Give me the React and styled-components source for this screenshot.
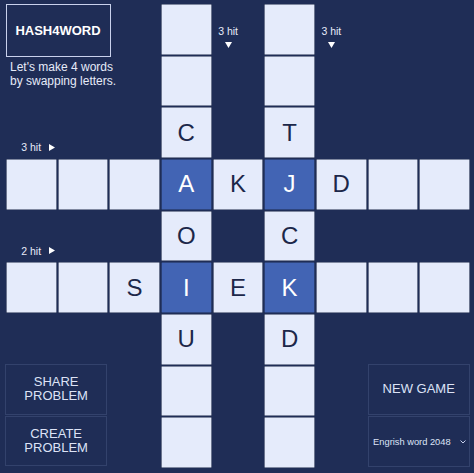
import React from "react";
import styled, { createGlobalStyle } from "styled-components";

const Global = createGlobalStyle`
  html, body { margin: 0; padding: 0; background: #1f2d56; }
  body { font-family: "Liberation Sans", Arial, sans-serif; }
`;

const Page = styled.div`
  width: 474px;
  height: 473px;
  background: #1f2d56;
  overflow: hidden;
  box-sizing: border-box;
  padding: 4px 0 0 6px;
`;

const Board = styled.div`
  display: grid;
  grid-template-columns: repeat(9, 50.6px);
  grid-template-rows: repeat(9, 50.6px);
  gap: 1.07px;
`;

const Cell = styled.div`
  grid-row: ${(p) => p.$r + 1};
  grid-column: ${(p) => p.$c + 1};
  background: ${(p) => (p.$hl ? "#4264b4" : "#e5ebfb")};
  color: ${(p) => (p.$hl ? "#ffffff" : "#1c2749")};
  box-shadow: inset 0 0 0 0.6px #1a2647;
  display: flex;
  align-items: center;
  justify-content: center;
  font-size: 24px;
  line-height: 1;
  user-select: none;
`;

const TitleBox = styled.div`
  grid-row: 1;
  grid-column: 1 / span 2;
  justify-self: start;
  align-self: start;
  width: 105px;
  height: 53px;
  margin-left: -0.5px;
  box-sizing: border-box;
  border: 1px solid #c9d1ec;
  display: flex;
  align-items: center;
  justify-content: center;
  color: #ffffff;
  font-weight: bold;
  font-size: 13px;
`;

const Desc = styled.div`
  grid-row: 2;
  grid-column: 1 / span 3;
  align-self: start;
  padding: 4.5px 0 0 4px;
  color: #e6ebf9;
  font-size: 12px;
  line-height: 14px;
  white-space: nowrap;
  z-index: 1;
`;

const RowHint = styled.div`
  grid-row: ${(p) => p.$r + 1};
  grid-column: 1;
  align-self: end;
  justify-self: end;
  margin-right: 1.5px;
  margin-bottom: 4.5px;
  display: flex;
  align-items: center;
  gap: 8px;
  color: #e6ebf9;
  font-size: 10.5px;
  line-height: 12px;
`;

const ColHint = styled.div`
  grid-row: 1;
  grid-column: ${(p) => p.$c + 1};
  align-self: start;
  justify-self: start;
  margin-left: 5.5px;
  margin-top: 20.5px;
  display: flex;
  flex-direction: column;
  align-items: center;
  gap: 5px;
  color: #e6ebf9;
  font-size: 10.5px;
  line-height: 12px;
`;

const Arrow = styled.svg`
  display: block;
  fill: #ffffff;
`;

const Button = styled.div`
  grid-row: ${(p) => p.$r + 1};
  grid-column: ${(p) => p.$c + 1} / span 2;
  margin: -1.5px ${(p) => (p.$c === 0 ? "1px" : "0")} 1.5px ${(p) => (p.$c === 0 ? "-1px" : "0")};
  box-sizing: border-box;
  border: 1px solid #33426c;
  display: flex;
  align-items: center;
  justify-content: center;
  text-align: center;
  color: #dde3f6;
  font-size: 13px;
  line-height: 14.5px;
  cursor: pointer;
`;

const SelectBox = styled.div`
  grid-row: 9;
  grid-column: 8 / span 2;
  margin: -1px 0 1px 0;
  box-sizing: border-box;
  border: 1px solid #33426c;
  display: flex;
  align-items: center;
  justify-content: space-between;
  padding: 0 2.5px 0 4.5px;
  color: #dde3f6;
  font-size: 9.3px;
  white-space: nowrap;
  cursor: pointer;
`;

const Chevron = styled.svg`
  display: block;
  flex: none;
  stroke: #c9d1ec;
  fill: none;
`;

const letters = {
  "2,3": "C", "3,3": "A", "4,3": "O", "5,3": "I", "6,3": "U",
  "2,5": "T", "3,5": "J", "4,5": "C", "5,5": "K", "6,5": "D",
  "3,4": "K", "3,6": "D",
  "5,2": "S", "5,4": "E",
};

const RightTri = () => (
  <Arrow width="6" height="7" viewBox="0 0 6 7">
    <polygon points="0,0 6,3.5 0,7" />
  </Arrow>
);

const DownTri = () => (
  <Arrow width="7" height="6" viewBox="0 0 7 6">
    <polygon points="0,0 7,0 3.5,6" />
  </Arrow>
);

export default function App() {
  const cells = [];
  for (let r = 0; r < 9; r++) {
    for (let c = 0; c < 9; c++) {
      if (c === 3 || c === 5 || r === 3 || r === 5) {
        const hl = (r === 3 || r === 5) && (c === 3 || c === 5);
        cells.push(
          <Cell key={`${r}-${c}`} $r={r} $c={c} $hl={hl}>
            {letters[`${r},${c}`] || ""}
          </Cell>
        );
      }
    }
  }
  return (
    <Page>
      <Global />
      <Board>
        <TitleBox>HASH4WORD</TitleBox>
        <Desc>
          Let's make 4 words
          <br />
          by swapping letters.
        </Desc>
        <ColHint $c={4}>
          <span>3 hit</span>
          <DownTri />
        </ColHint>
        <ColHint $c={6}>
          <span>3 hit</span>
          <DownTri />
        </ColHint>
        <RowHint $r={2}>
          <span>3 hit</span>
          <RightTri />
        </RowHint>
        <RowHint $r={4}>
          <span>2 hit</span>
          <RightTri />
        </RowHint>
        {cells}
        <Button $r={7} $c={0}>
          SHARE
          <br />
          PROBLEM
        </Button>
        <Button $r={8} $c={0}>
          CREATE
          <br />
          PROBLEM
        </Button>
        <Button $r={7} $c={7}>NEW GAME</Button>
        <SelectBox>
          <span>Engrish word 2048</span>
          <Chevron width="6" height="4" viewBox="0 0 6 4">
            <polyline points="0.5,0.5 3,3 5.5,0.5" strokeWidth="1" />
          </Chevron>
        </SelectBox>
      </Board>
    </Page>
  );
}
